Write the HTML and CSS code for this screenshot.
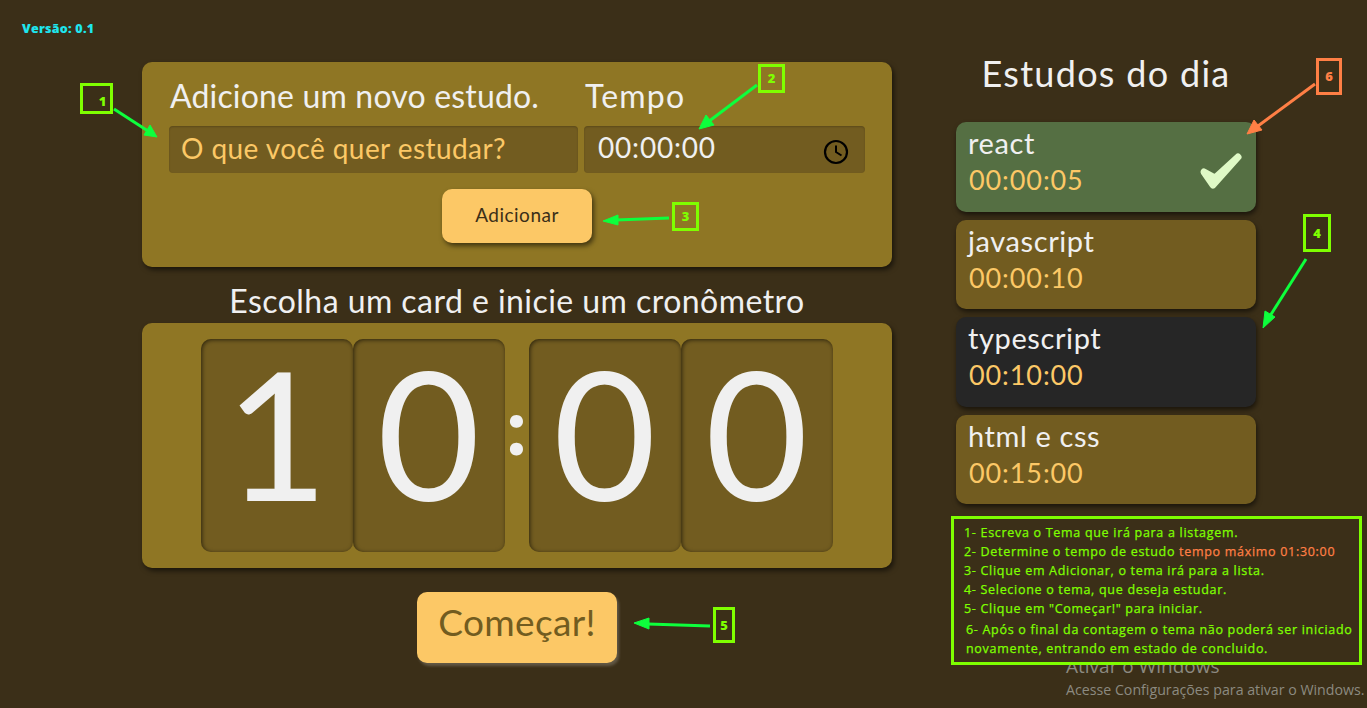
FILE: index.html
```html
<!DOCTYPE html>
<html lang="pt-BR">
<head>
<meta charset="utf-8">
<title>Estudos</title>
<link rel="stylesheet" href="styles.css">
</head>
<body>
<div class="page">
  <p class="version">Versão: 0.1</p>
  <main class="main-col">
    <form class="form-card">
      <div class="field">
        <label class="field-label">Adicione um novo estudo.</label>
        <div class="input"><span class="placeholder">O que você quer estudar?</span></div>
      </div>
      <div class="field">
        <label class="field-label field-label-time">Tempo</label>
        <div class="input input-time">
          <span class="time-value">00:00:00</span>
          <svg class="clock" viewBox="0 0 26 26" width="26" height="26"><circle cx="13" cy="13" r="11" fill="none" stroke="#000" stroke-width="2.2"/><path d="M13 6.500V13l5.500 3.500" fill="none" stroke="#000" stroke-width="2"/></svg>
        </div>
      </div>
      <button type="button" class="add-btn">Adicionar</button>
    </form>
    <h2 class="timer-title">Escolha um card e inicie um cronômetro</h2>
    <section class="timer-card">
      <div class="digit-pair"><span class="digit">1</span><span class="digit">0</span></div>
      <span class="colon">:</span>
      <div class="digit-pair"><span class="digit">0</span><span class="digit">0</span></div>
    </section>
    <button type="button" class="start-btn">Começar!</button>
  </main>
  <aside class="side-col">
    <h1 class="side-title">Estudos do dia</h1>
    <ul class="study-list">
      <li class="study study-done">
        <div><h3 class="study-name">react</h3><p class="study-time">00:00:05</p></div>
        <svg class="check" viewBox="0 0 44 40" width="44" height="40"><path d="M5 21 14 34 39 6 16 27Z" fill="#dff9c6" stroke="#dff9c6" stroke-width="7" stroke-linejoin="round"/></svg>
      </li>
      <li class="study"><div><h3 class="study-name">javascript</h3><p class="study-time">00:00:10</p></div></li>
      <li class="study study-active"><div><h3 class="study-name">typescript</h3><p class="study-time">00:10:00</p></div></li>
      <li class="study"><div><h3 class="study-name">html e css</h3><p class="study-time">00:15:00</p></div></li>
    </ul>
  </aside>

  <div class="watermark">
    <p class="wm-title">Ativar o Windows</p>
    <p class="wm-sub">Acesse Configurações para ativar o Windows.</p>
  </div>

  <div class="notes">
    <p>1- Escreva o Tema que irá para a listagem.</p>
    <p>2- Determine o tempo de estudo <span class="notes-hot">tempo máximo 01:30:00</span></p>
    <p>3- Clique em Adicionar, o tema irá para a lista.</p>
    <p>4- Selecione o tema, que deseja estudar.</p>
    <p>5- Clique em "Começar!" para iniciar.</p>
    <p class="notes-last">6- Após o final da contagem o tema não poderá ser iniciado novamente, entrando em estado de concluido.</p>
  </div>

  <svg class="arrows" viewBox="0 0 1367 708" width="1367" height="708">
    <g stroke="#0dff3c" stroke-width="3" fill="#0dff3c">
      <path d="M114 109 148 131"/><path d="M157 137 144 135 150 125Z" stroke-width="1"/>
      <path d="M757 85 708 122"/><path d="M699 129 706 115 714 125Z" stroke-width="1"/>
      <path d="M669 218 616 220"/><path d="M603 221 618 215 618 225Z" stroke-width="1"/>
      <path d="M1306 259 1270 316"/><path d="M1263 328 1265 311 1275 317Z" stroke-width="1"/>
      <path d="M710 626 648 624"/><path d="M634 623 649 618 649 629Z" stroke-width="1"/>
    </g>
    <g stroke="#ff7f45" stroke-width="3" fill="#ff7f45">
      <path d="M1315 84 1258 126"/><path d="M1247 134 1254 120 1262 130Z" stroke-width="1"/>
    </g>
  </svg>
  <span class="tag tag-1">1</span>
  <span class="tag tag-2">2</span>
  <span class="tag tag-3">3</span>
  <span class="tag tag-4">4</span>
  <span class="tag tag-5">5</span>
  <span class="tag tag-6">6</span>
</div>
</body>
</html>
```
FILE: styles.css
```css
* { box-sizing: border-box; }
html, body { margin: 0; height: 100%; overflow: hidden; }
body { background: #3b2f18; font-family: "Lato", "Open Sans", sans-serif; color: #f0f0f0; }
p, h1, h2, h3, ul { margin: 0; padding: 0; font-weight: 400; }
.page { position: relative; width: 1367px; height: 708px; display: flex; align-items: flex-start; padding: 62px 0 0 142px; gap: 64px; overflow: hidden; }

.version { position: absolute; left: 22px; top: 21px; font: 800 12.500px/16px "Open Sans", sans-serif; letter-spacing: .25px; color: #1ee6ee; }

.main-col { width: 750px; display: flex; flex-direction: column; align-items: center; }
.form-card { width: 100%; height: 205px; background: #8f7624; border-radius: 10px; box-shadow: 2px 3px 5px rgba(0,0,0,.55); padding: 15px 27px 0; display: grid; grid-template-columns: 409px 281px; column-gap: 6px; justify-items: center; align-content: start; }
.field { width: 100%; }
.field-label { display: block; font-size: 32px; line-height: 38px; letter-spacing: .17px; margin-bottom: 11px; padding-left: 1px; color: #f0f0f0; }
.field-label-time { letter-spacing: 1.200px; }
.input { height: 47px; background: #725c20; border-radius: 4px; box-shadow: inset 0 1px 2px rgba(0,0,0,.2); display: flex; align-items: center; padding: 0 14px 0 13px; font-size: 28px; }
.placeholder { color: #fcc866; letter-spacing: .42px; margin: 0 0 4px -1px; }
.input-time { justify-content: space-between; }
.time-value { color: #f0f0f0; letter-spacing: .8px; margin: 0 0 5px 1px; }
.clock { margin-top: 4px; margin-right: 2px; }
.add-btn { grid-column: 1 / -1; margin-top: 16px; width: 150px; height: 54px; border: 0; border-radius: 10px; background: #fcc866; color: #3b2f18; font: 400 19px "Lato", sans-serif; letter-spacing: .5px; padding-bottom: 5px; box-shadow: 2px 3px 5px rgba(0,0,0,.55); }

.timer-title { font-size: 32px; line-height: 36px; letter-spacing: .45px; margin-top: 16px; height: 40px; text-align: center; }
.timer-card { width: 100%; height: 245px; padding-right: 1px; background: #8f7624; border-radius: 10px; box-shadow: 2px 3px 5px rgba(0,0,0,.55); display: flex; justify-content: center; align-items: center; }
.digit-pair { display: flex; }
.digit { width: 152px; height: 213px; background: #725c20; border-radius: 10px; box-shadow: inset 1px 1px 4px rgba(0,0,0,.6); font-size: 178px; line-height: 187px; text-align: center; color: #f0f0f0; }
.colon { width: 24px; height: 213px; font-size: 80px; font-weight: 900; line-height: 170px; text-align: center; color: #f0f0f0; }

.start-btn { margin-top: 24px; width: 200px; height: 71px; border: 0; border-radius: 10px; background: #fcc866; color: #725c20; font: 400 37px "Lato", sans-serif; letter-spacing: .35px; padding-bottom: 14px; box-shadow: 2px 3px 3px rgba(255,255,255,.2); }

.side-col { width: 300px; display: flex; flex-direction: column; }
.side-title { font-size: 36px; line-height: 40px; letter-spacing: 1.300px; text-align: center; margin: -9px 0 29px; color: #f0f0f0; }
.study-list { list-style: none; display: flex; flex-direction: column; gap: 8px; }
.study { height: 89.500px; padding: 4px 14px 0 13px; border-radius: 10px; background: #725c20; box-shadow: 1px 3px 5px rgba(0,0,0,.55); display: flex; justify-content: space-between; align-items: center; }
.study > div { align-self: flex-start; }
.study-done { background: #556f43; }
.study-active { background: #262626; }
.study-name { font-size: 29px; line-height: 34px; letter-spacing: .6px; margin-left: -1px; color: #f0f0f0; }
.study-time { font-size: 27px; line-height: 38px; letter-spacing: .9px; margin-top: 1px; color: #fcc866; }
.check { margin-top: 4px; margin-right: -1px; }

.notes { position: absolute; left: 951px; top: 516px; width: 411px; height: 149px; border: 3px solid #7fff00; background: #3b2f18; padding: 4px 0 0 10px; font: 800 12.500px/19px "Open Sans", sans-serif; letter-spacing: .7px; -webkit-text-stroke: .25px currentColor; color: #7fff00; }
.notes-hot { color: #ff7f45; }
.notes-last { margin: 2px 0 0 2px; }

.watermark { position: absolute; left: 1066px; top: 653px; white-space: nowrap; font-family: "Open Sans", sans-serif; color: #8c8a80; }
.wm-title { font-size: 19px; line-height: 26px; }
.wm-sub { font-size: 14.200px; line-height: 20px; margin-top: 1px; }

.arrows { position: absolute; left: 0; top: 0; pointer-events: none; }
.tag { position: absolute; border: 3px solid #7fff00; color: #7fff00; font: 800 13px/1 "Open Sans", sans-serif; display: flex; align-items: center; justify-content: center; }
.tag-1 { left: 80px; top: 83px; width: 33px; height: 31px; padding: 6px 0 0 12px; }
.tag-2 { left: 758px; top: 64px; width: 27px; height: 29px; }
.tag-3 { left: 672px; top: 202px; width: 27px; height: 29px; }
.tag-4 { left: 1303px; top: 214px; width: 28px; height: 38px; }
.tag-5 { left: 713px; top: 607px; width: 22px; height: 36px; }
.tag-6 { left: 1316px; top: 58px; width: 26px; height: 37px; border-color: #ff7f45; color: #ff7f45; }
```
